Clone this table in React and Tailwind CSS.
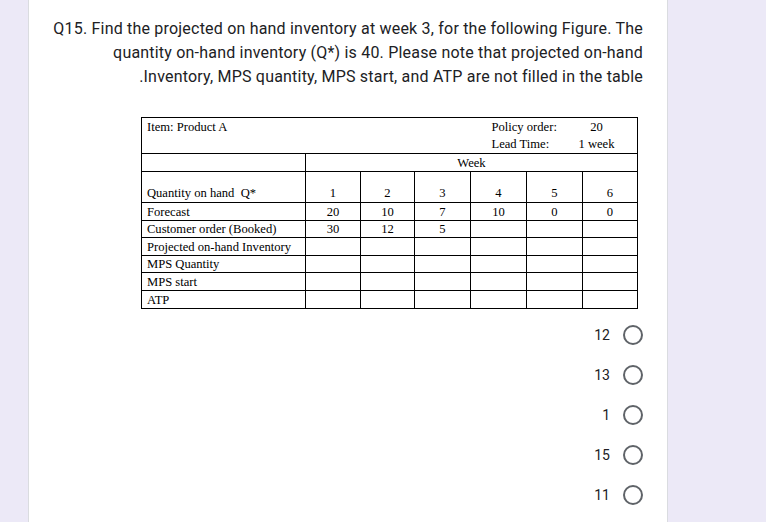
const weeks = [1, 2, 3, 4, 5, 6];

const rows = [
  { label: "Forecast", values: [20, 10, 7, 10, 0, 0], h: "h-[18px]" },
  { label: "Customer order (Booked)", values: [30, 12, 5, "", "", ""], h: "h-[17px]" },
  { label: "Projected on-hand Inventory", values: ["", "", "", "", "", ""], h: "h-[18px]" },
  { label: "MPS Quantity", values: ["", "", "", "", "", ""], h: "h-[17px]" },
  { label: "MPS start", values: ["", "", "", "", "", ""], h: "h-[18px]" },
  { label: "ATP", values: ["", "", "", "", "", ""], h: "h-[18px]" },
];

const options = ["12", "13", "1", "15", "11"];

function MpsTable() {
  return (
    <table className="border-collapse table-fixed w-[496px] text-[12.6px] text-black font-['Liberation_Serif',serif]">
      <colgroup>
        <col className="w-[164px]" />
        <col className="w-[55px]" />
        <col className="w-[54px]" />
        <col className="w-[56px]" />
        <col className="w-[56px]" />
        <col className="w-[56px]" />
        <col className="w-[55px]" />
      </colgroup>
      <tbody>
        {/* header */}
        <tr className="h-[34px]">
          <td colSpan={4} className="border-t border-b border-l border-black align-top pl-[5px] pt-[1px] leading-[17px]">
            Item: Product A
          </td>
          <td colSpan={3} className="border-t border-b border-r border-black align-top pt-[1px] leading-[17px]">
            <div className="grid grid-cols-[85px_40px] pl-[21px]">
              <span>Policy order:</span>
              <span className="text-center">20</span>
              <span>Lead Time:</span>
              <span className="text-center">1 week</span>
            </div>
          </td>
        </tr>

        <tr className="h-[18px]">
          <td className="border border-black"></td>
          <td colSpan={6} className="border border-black text-center leading-[16px]">
            Week
          </td>
        </tr>

        <tr className="h-[31px]">
          <td className="border border-black align-bottom pl-[5px] pb-[2px] leading-[14px]">
            Quantity on hand&nbsp; Q*
          </td>
          {weeks.map(w => (
            <td key={w} className="border border-black align-bottom text-center pb-[2px] leading-[14px]">
              {w}
            </td>
          ))}
        </tr>

        {rows.map(r => (
          <tr key={r.label} className={r.h}>
            <td className="border border-black pl-[5px] leading-[16px] whitespace-nowrap">{r.label}</td>
            {r.values.map((v, i) => (
              <td key={i} className="border border-black text-center leading-[16px]">{v}</td>
            ))}
          </tr>
        ))}
      </tbody>
    </table>
  );
}

export default function App() {
  return (
    <div className="h-[522px] overflow-hidden bg-[#ece9f7]">
      <div className="ml-[28px] w-[640px] h-[522px] bg-white border-x border-[#dadce0] px-[24px] pt-[17px]">
        {/* question */}
        <p className="text-right whitespace-nowrap text-[16px] tracking-[0.2px] leading-[24px] text-[#202124] font-['Roboto',sans-serif]">
          Q15. Find the projected on hand inventory at week 3, for the following Figure. The
          <br />
          quantity on-hand inventory (Q*) is 40. Please note that projected on-hand
          <br />
          .Inventory, MPS quantity, MPS start, and ATP are not filled in the table
        </p>

        {/* figure */}
        <div className="flex justify-end pr-[5px] mt-[28px]">
          <MpsTable />
        </div>

        {/* options */}
        <div className="mt-[6px] flex flex-col">
          {options.map(o => (
            <label key={o} className="h-[40px] flex items-center justify-end gap-[13px] cursor-pointer">
              <span className="text-[14px] text-[#202124] font-['Roboto',sans-serif]">{o}</span>
              <span className="w-[20px] h-[20px] rounded-full border-2 border-[#5f6368]"></span>
            </label>
          ))}
        </div>
      </div>
    </div>
  );
}
